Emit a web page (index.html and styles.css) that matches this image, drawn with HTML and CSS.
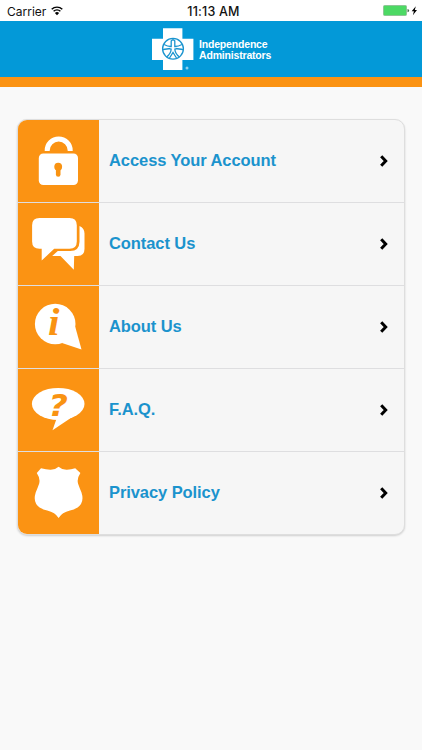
FILE: index.html
```html
<!DOCTYPE html>
<html lang="en">
<head>
<meta charset="utf-8">
<title>Independence Administrators</title>
<link rel="stylesheet" href="styles.css">
</head>
<body>
<div class="status">
  <div class="carrier"><span>Carrier</span>
    <svg class="wifi" viewBox="0 0 12 10" width="12" height="10"><path d="M.7 3.3a7.5 7.5 0 0 1 10.6 0M2.6 5.3a4.8 4.8 0 0 1 6.8 0" fill="none" stroke="#000" stroke-width="1.4"/><path d="M6 9.2 3.9 7.1a3 3 0 0 1 4.2 0z"/></svg>
  </div>
  <div class="time">11:13 AM</div>
  <div class="power">
    <svg viewBox="0 0 36 12" width="36" height="12"><rect x=".5" y=".5" width="23" height="10" rx="1" fill="#4cd964" stroke="#8fc596"/><path d="M24.5 4a1.6 1.6 0 0 1 0 3.2z" fill="#456b4a"/><path d="M32.8 1.2 28.7 6.2h2.2l-1 4 4.1-5.3h-2.2z"/></svg>
  </div>
</div>
<header class="header">
  <svg class="cross" viewBox="152 28 43 43" width="43" height="43">
    <path fill="#fff" d="M163 28.300h19.400v10.400h11v21.400h-11v9.900H163v-9.900h-11V38.700h11z"/>
    <g fill="none" stroke="#1a94cf" stroke-width="1.300"><circle cx="173" cy="48.800" r="10.400"/><path d="M164 44.500q3.500 2 7.200 2V41q1.800-2.500 3.600 0v5.500q3.700 0 7.200-2M163 49.500l7.500-1M183 49.500l-7.500-1M171.200 48.500c0 3.500-2 6.500-4.700 8.500M174.800 48.500c0 3.500 2 6.500 4.700 8.500M169.500 58l3.500-5.500 3.500 5.500"/></g>
    <circle cx="187" cy="68" r="1.500" fill="#8fd0ed"/>
  </svg>
  <div class="brand"><span class="b1">Independence</span><span class="b2">Administrators</span></div>
</header>
<main>
  <nav class="menu">
    <a class="row"><span class="tile"><svg viewBox="18 120 81 82"><rect x="38.800" y="153.500" width="39.200" height="31.500" rx="4.500" fill="#fff"/><path d="M47.200 151v-.5a11.500 11.500 0 0 1 23 0v.5" fill="none" stroke="#fff" stroke-width="5"/><circle cx="58.200" cy="166.700" r="3.900" fill="#f99312"/><path d="M58.200 168v6.500" stroke="#f99312" stroke-width="4.600" stroke-linecap="round"/></svg></span><span class="label">Access Your Account</span><svg class="chev" viewBox="0 0 10 14"><path d="M2.200 2.200 6.700 7l-4.500 4.800"/></svg></a>
    <a class="row"><span class="tile"><svg viewBox="18 203 81 82"><path fill="#fff" d="M39.500 218h30q7.300 0 7.300 7.300v16.200q0 7.300-7.300 7.300H54.200L41.700 260.500V248.800h-2.200q-7.400 0-7.400-7.300v-16.200q0-7.300 7.400-7.300zM79.500 226q5 2.300 5 7.500v15.500q0 7-7 7h-3.300L73.800 269.800 60.500 256h-8.300l5.600-5h12.500q9 0 9.200-9.300z"/></svg></span><span class="label">Contact Us</span><svg class="chev" viewBox="0 0 10 14"><path d="M2.200 2.200 6.700 7l-4.500 4.800"/></svg></a>
    <a class="row"><span class="tile"><svg viewBox="18 286 81 82"><circle cx="55.200" cy="324" r="20.300" fill="#fff"/><path fill="#fff" d="M75.300 327 81.500 349.500 62 343z"/><text class="info" transform="translate(48 334.700) scale(1.120 1)">i</text></svg></span><span class="label">About Us</span><svg class="chev" viewBox="0 0 10 14"><path d="M2.200 2.200 6.700 7l-4.500 4.800"/></svg></a>
    <a class="row"><span class="tile"><svg viewBox="18 369 81 82"><ellipse cx="58.200" cy="403.900" rx="26.300" ry="16" fill="#fff"/><path fill="#fff" d="M56.800 418 52.500 430.200 76 414.500z"/><text class="question" transform="translate(48.500 415.800) scale(1.080 1)">?</text></svg></span><span class="label">F.A.Q.</span><svg class="chev" viewBox="0 0 10 14"><path d="M2.200 2.200 6.700 7l-4.500 4.800"/></svg></a>
    <a class="row"><span class="tile"><svg viewBox="18 452 81 82"><path fill="#fff" d="M58.600 466.800Q62 470 67 469.800 71 469.500 75.200 468.200L80.400 473Q76.700 478.500 78 483.500 79.200 487 81.500 492.500 83.700 499.500 81 504 78.500 508.500 70 510.500 62 512.300 58.600 518 55.200 512.300 47.200 510.500 38.700 508.500 36.200 504 33.500 499.500 35.700 492.500 38 487 39.200 483.500 40.500 478.500 36.800 473L41 468.200Q46.200 469.500 50.200 469.800 55.200 470 58.600 466.800z"/></svg></span><span class="label">Privacy Policy</span><svg class="chev" viewBox="0 0 10 14"><path d="M2.200 2.200 6.700 7l-4.500 4.800"/></svg></a>
  </nav>
</main>
</body>
</html>
```
FILE: styles.css
```css
* { box-sizing: border-box; }
body { margin: 0; height: 750px; background: #f9f9f9; font-family: "Liberation Sans", Arial, sans-serif; overflow: hidden; }
.status { height: 21px; background: #fff; display: grid; grid-template-columns: 1fr auto 1fr; align-items: center; font: 12px Inter, "Liberation Sans", sans-serif; color: #111; }
.carrier { display: flex; align-items: center; gap: 5px; padding: 1px 0 0 7px; }
.wifi { margin-top: -1px; }
.time { font-size: 12.500px; font-weight: 500; letter-spacing: .2px; padding: 2px 0 0 5px; }
.power { display: flex; justify-content: flex-end; padding-right: 3px; }
.header { height: 66px; background: #0399d8; border-bottom: 10px solid #fb9313; display: flex; padding: 7px 0 0 152px; }
.cross { flex: none; }
.brand { display: flex; flex-direction: column; padding: 11px 0 0 4px; color: #fff; font-size: 10.500px; line-height: 11px; font-weight: bold; letter-spacing: -.18px; }
.menu { width: 388px; margin: 32px 0 0 17px; border: 1px solid #dedede; border-radius: 10px; overflow: hidden; background: #f6f6f6; box-shadow: 0 1px 2px #cfcfcf; }
.row { display: flex; align-items: center; height: 83px; border-bottom: 1px solid #dedee0; }
.row:last-child { height: 82px; border-bottom: 0; }
.tile { width: 81px; height: 82px; background: #fb9313; flex: none; }
.tile svg { display: block; width: 81px; height: 82px; }
.label { flex: 1; padding-left: 10px; margin-top: -2px; color: #1b93cd; font-weight: bold; font-size: 16.500px; letter-spacing: -.08px; }
.chev { width: 10px; height: 14px; margin-right: 15px; fill: none; stroke: #000; stroke-width: 3; }
.info { font: italic bold 37px "Liberation Serif", serif; fill: #f99312; }
.question { font: italic bold 31px "DejaVu Sans", sans-serif; fill: #f99312; }
```
